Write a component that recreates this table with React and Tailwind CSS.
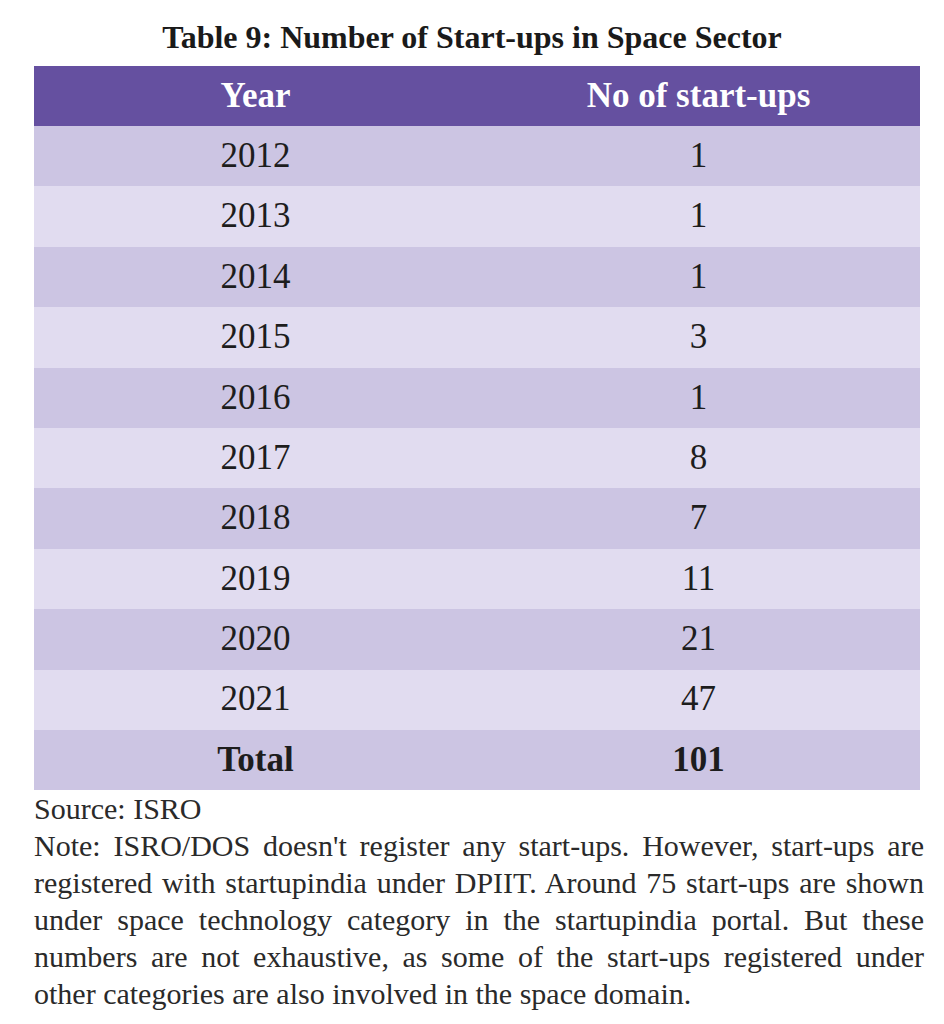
import React from 'react';

const rows = [
  ['2012', '1'],
  ['2013', '1'],
  ['2014', '1'],
  ['2015', '3'],
  ['2016', '1'],
  ['2017', '8'],
  ['2018', '7'],
  ['2019', '11'],
  ['2020', '21'],
  ['2021', '47'],
];

const noteLines = [
  "Note: ISRO/DOS doesn't register any start-ups. However, start-ups are",
  'registered with startupindia under DPIIT. Around 75 start-ups are shown',
  'under space technology category in the startupindia portal. But these',
  'numbers are not exhaustive, as some of the start-ups registered under',
];

function App() {
  return (
    <div className="w-[944px] min-h-[1024px] bg-white text-[#1d1d1d] font-['Liberation_Serif',serif]">
      <h1 className="pt-[18px] h-[66px] text-center text-[32px] leading-[38px] font-bold text-[#1a1a1a]">
        Table 9: Number of Start-ups in Space Sector
      </h1>

      <div className="mx-[34px] w-[886px]">
        <div className="grid grid-cols-2 h-[60px] items-center bg-[#6550a0] text-white text-[35px] font-bold">
          <div className="text-center">Year</div>
          <div className="text-center">No of start-ups</div>
        </div>
        {rows.map(([year, count], i) => (
          <div
            key={year}
            className={`grid grid-cols-2 h-[60.4px] items-center text-[35px] ${i % 2 === 0 ? 'bg-[#ccc5e3]' : 'bg-[#e1dcf0]'}`}
          >
            <div className="text-center">{year}</div>
            <div className="text-center">{count}</div>
          </div>
        ))}
        <div className="grid grid-cols-2 h-[60px] items-center bg-[#ccc5e3] text-[35px] font-bold">
          <div className="text-center">Total</div>
          <div className="text-center">101</div>
        </div>
      </div>

      <div className="mx-[34px] w-[890px] text-[30px] leading-[37px] text-[#2a2a2a]">
        <p>Source: ISRO</p>
        {noteLines.map((line) => (
          <p key={line} className="text-justify [text-align-last:justify] whitespace-nowrap">
            {line}
          </p>
        ))}
        <p>other categories are also involved in the space domain.</p>
      </div>
    </div>
  );
}

export default App;
